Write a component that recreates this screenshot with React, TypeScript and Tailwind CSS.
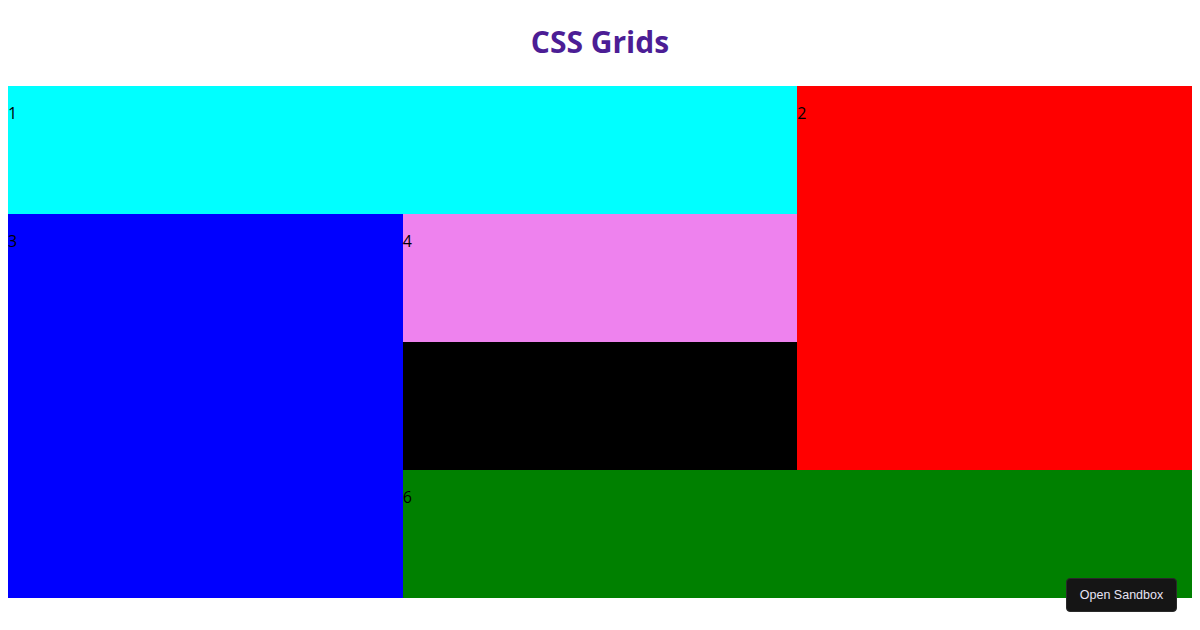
export default function App() {
  const cell = "text-[16px] leading-[22px] text-black";
  return (
    <div className="w-[1200px] h-[630px] bg-white px-2 relative" style={{ fontFamily: '"Open Sans", sans-serif' }}>
      <div className="h-[86px] flex items-center justify-center pb-[3px]">
        <h1 className="text-[30px] font-bold text-[#4c1d95] leading-none">CSS Grids</h1>
      </div>
      <div className="grid grid-cols-3 grid-rows-[repeat(4,128px)]">
        <div className="col-span-2 bg-[#00ffff]"><p className={`${cell} mt-4`}>1</p></div>
        <div className="row-span-3 bg-[#ff0000]"><p className={`${cell} mt-4`}>2</p></div>
        <div className="row-span-3 bg-[#0000ff]"><p className={`${cell} mt-4`}>3</p></div>
        <div className="bg-[#ee82ee]"><p className={`${cell} mt-4`}>4</p></div>
        <div className="bg-black"><p className={`${cell} mt-4`}>5</p></div>
        <div className="col-span-2 bg-[#008000]"><p className={`${cell} mt-4`}>6</p></div>
      </div>
      <div className="absolute right-[23px] bottom-[18px] w-[111px] h-[34px] rounded-[4px] bg-[#151515] border border-[#2a2a2a] flex items-center justify-center text-[12.5px] text-[#e8e4f4]" style={{ fontFamily: '"Liberation Sans", Arial, sans-serif' }}>
        Open Sandbox
      </div>
    </div>
  );
}
